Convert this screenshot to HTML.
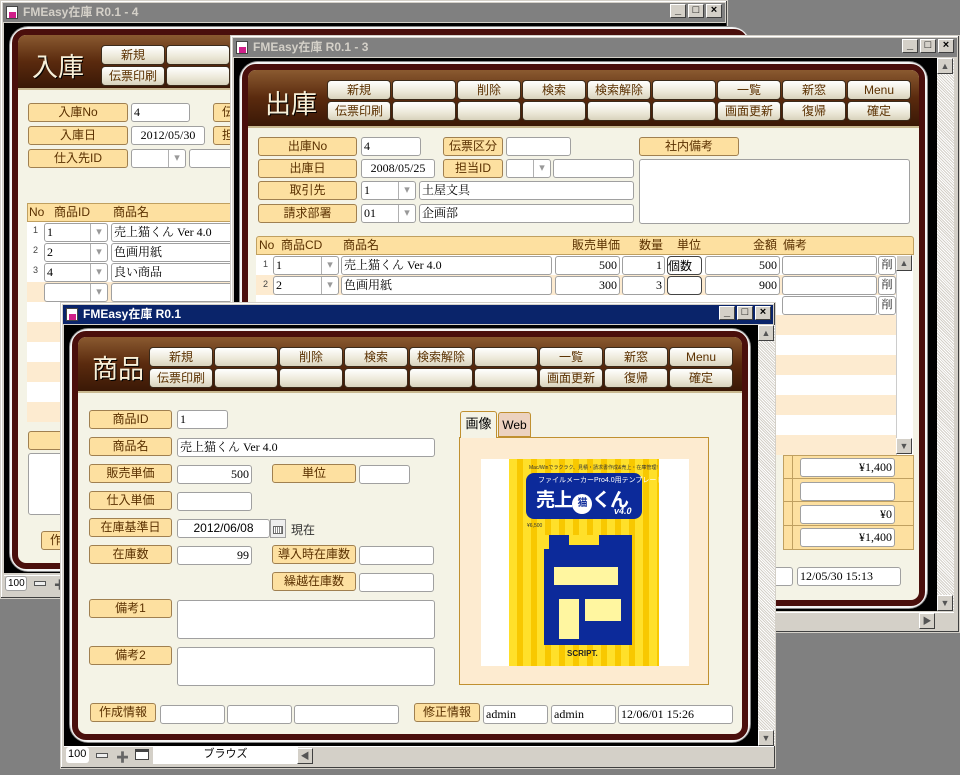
<!DOCTYPE html>
<html><head><meta charset="utf-8"><style>
*{box-sizing:border-box;margin:0;padding:0}
body{width:960px;height:775px;background:#808080;position:relative;overflow:hidden;font-family:"Liberation Sans","Noto Sans CJK JP",sans-serif;font-size:12px;color:#000}
div,span{position:absolute}
.win{background:#d4d0c8;border:1px solid #d4d0c8;box-shadow:inset -1px -1px #404040,inset 1px 1px #fff}
.tb{height:19px;left:2px;right:2px;top:2px;color:#d4d0c8;font-weight:bold;font-size:12px;line-height:19px;padding-left:20px;background:#808080}
.tb.act{background:#0a246a;color:#fff}
.ic{left:3px;top:3px;width:12px;height:13px;background:#fff;border:1px solid #444}
.ic:after{content:"";position:absolute;left:2px;top:5px;width:7px;height:6px;background:#d0208a}
.wb{top:3px;width:16px;height:14px;background:#d4d0c8;border:1px solid;border-color:#fff #404040 #404040 #fff;color:#000;font-size:11px;line-height:11px;text-align:center;font-weight:bold}
.blk{background:#000}
.frm{border-radius:18px;background:#dcdcdc;border:2px solid #f4f4f4;box-shadow:0 0 0 1px #888}
.inr{border-radius:14px;border:6px solid #4a0f0c;background:#f4f3e6;overflow:hidden}
.hd{left:0;right:0;top:0;background:linear-gradient(#8a5a30,#5a2a0e 50%,#3a1806);border-bottom:2px solid #c8b890}
.ttl{color:#f8f0d8;font-size:26px;text-shadow:1px 1px 0 #000}
.bt{height:20px;width:64px;border:1px solid #3a2a1a;border-radius:4px;background:linear-gradient(#fff,#ece8d8 60%,#d8d2bc);color:#5a3000;text-align:center;line-height:18px;font-size:12px}
.lb{height:19px;border:1px solid #a08050;border-radius:3px;background:#fde0a0;color:#5a3000;text-align:center;line-height:17px;font-size:12px}
.fd{height:19px;border:1px solid #a0a0a0;border-radius:3px;background:#fff;line-height:17px;padding:0 2px;font-family:"Liberation Serif","Noto Serif CJK JP",serif;font-size:12px;white-space:nowrap;overflow:hidden}
.r{text-align:right}.c{text-align:center}
.cb{height:19px;border:1px solid #a0a0a0;border-radius:3px;background:#fff;line-height:17px;padding-left:2px;font-family:"Liberation Serif",serif}
.cb:after{content:"▾";position:absolute;right:0;top:0;width:16px;height:17px;border-left:1px solid #b0b0b0;color:#999;text-align:center;font-size:11px}
.sb{background:#e8e6e0;background-image:repeating-linear-gradient(45deg,#d4d0c8 0 1px,#fff 1px 2px)}
.ar{width:16px;height:16px;background:#d4d0c8;border:1px solid;border-color:#fff #404040 #404040 #fff;text-align:center;font-size:9px;line-height:14px;color:#555}
.st{background:#d4d0c8;border-top:1px solid #fff;font-size:11px}
</style></head><body>

<!-- ===== Window 1 入庫 ===== -->
<div class="win" style="left:0;top:0;width:728px;height:599px">
 <div class="tb"><div class="ic"></div>FMEasy在庫 R0.1 - 4</div>
 <div class="wb" style="left:669px">_</div><div class="wb" style="left:687px">□</div><div class="wb" style="left:705px">×</div>
 <div class="blk" style="left:3px;top:22px;width:722px;height:550px"></div>
 <div class="frm" style="left:9px;top:26px;width:740px;height:544px">
  <div class="inr" style="left:0;top:0;right:0;bottom:0">
   <div class="hd" style="height:55px"><span class="ttl" style="left:14px;top:12px">入庫</span></div>
  </div>
 </div>
 <div class="bt" style="left:100px;top:44px">新規</div><div class="bt" style="left:165px;top:44px"></div>
 <div class="bt" style="left:100px;top:65px">伝票印刷</div><div class="bt" style="left:165px;top:65px"></div>
 <div class="lb" style="left:27px;top:102px;width:100px">入庫No</div><div class="fd" style="left:130px;top:102px;width:59px">4</div>
 <div class="lb" style="left:212px;top:102px;width:30px">伝</div>
 <div class="lb" style="left:27px;top:125px;width:100px">入庫日</div><div class="fd c" style="left:130px;top:125px;width:74px">2012/05/30</div>
 <div class="lb" style="left:212px;top:125px;width:30px">担</div>
 <div class="lb" style="left:27px;top:148px;width:100px">仕入先ID</div><div class="cb" style="left:130px;top:148px;width:55px"></div><div class="fd" style="left:188px;top:148px;width:50px"></div>
 <div style="left:26px;top:202px;width:210px;height:19px;background:#fde0a0;border:1px solid #c0a060;color:#5a3000;line-height:17px"><span style="left:1px">No</span><span style="left:26px">商品ID</span><span style="left:85px">商品名</span></div>
 <div style="left:26px;top:221px;width:210px;height:80px;background:#fff"></div>
 <div style="left:26px;top:281px;width:210px;height:20px;background:#fdebd0"></div>
 <span style="left:32px;top:224px;font-size:9px;color:#444">1</span><div class="cb" style="left:43px;top:222px;width:64px">1</div><div class="fd" style="left:110px;top:222px;width:130px">売上猫くん Ver 4.0</div>
 <span style="left:32px;top:244px;font-size:9px;color:#444">2</span><div class="cb" style="left:43px;top:242px;width:64px">2</div><div class="fd" style="left:110px;top:242px;width:130px">色画用紙</div>
 <span style="left:32px;top:264px;font-size:9px;color:#444">3</span><div class="cb" style="left:43px;top:262px;width:64px">4</div><div class="fd" style="left:110px;top:262px;width:130px">良い商品</div>
 <div class="cb" style="left:43px;top:282px;width:64px"></div><div class="fd" style="left:110px;top:282px;width:130px"></div>
 <div style="left:26px;top:301px;width:40px;height:120px;background:repeating-linear-gradient(#fff 0 20px,#fdebd0 20px 40px)"></div>
 <div class="lb" style="left:27px;top:430px;width:40px"></div>
 <div class="fd" style="left:27px;top:452px;width:40px;height:62px"></div>
 <div class="lb" style="left:40px;top:530px;width:30px">作</div>
 <div class="st" style="left:3px;top:574px;width:722px;height:22px"></div>
 <div class="fd" style="left:4px;top:575px;width:22px;height:15px;font-size:10px;line-height:13px;font-family:Liberation Sans">100</div>
 <span style="left:33px;top:580px;width:12px;height:5px;border:1px solid #555;background:#eee"></span>
 <span style="left:53px;top:575px;font-weight:bold;color:#555">✚</span>
</div>

<!-- ===== Window 2 出庫 ===== -->
<div class="win" style="left:230px;top:35px;width:730px;height:598px">
 <div class="tb"><div class="ic"></div>FMEasy在庫 R0.1 - 3</div>
 <div class="wb" style="left:671px">_</div><div class="wb" style="left:689px">□</div><div class="wb" style="left:707px">×</div>
 <div class="blk" style="left:3px;top:22px;width:703px;height:553px"></div>
 <div class="frm" style="left:9px;top:26px;width:687px;height:546px">
  <div class="inr" style="left:0;top:0;right:0;bottom:0">
   <div class="hd" style="height:58px"><span class="ttl" style="left:17px;top:14px">出庫</span></div>
  </div>
 </div>
 <div class="sb" style="left:706px;top:22px;width:17px;height:553px"></div>
 <div class="ar" style="left:706px;top:22px">▲</div><div class="ar" style="left:706px;top:559px">▼</div>
 <div class="st" style="left:3px;top:576px;width:720px;height:18px"></div>
 <div class="ar" style="left:688px;top:577px">▶</div>
</div>
<div class="bt" style="left:327px;top:80px">新規</div><div class="bt" style="left:392px;top:80px"></div><div class="bt" style="left:457px;top:80px">削除</div><div class="bt" style="left:522px;top:80px">検索</div><div class="bt" style="left:587px;top:80px">検索解除</div><div class="bt" style="left:652px;top:80px"></div><div class="bt" style="left:717px;top:80px">一覧</div><div class="bt" style="left:782px;top:80px">新窓</div><div class="bt" style="left:847px;top:80px">Menu</div>
<div class="bt" style="left:327px;top:101px">伝票印刷</div><div class="bt" style="left:392px;top:101px"></div><div class="bt" style="left:457px;top:101px"></div><div class="bt" style="left:522px;top:101px"></div><div class="bt" style="left:587px;top:101px"></div><div class="bt" style="left:652px;top:101px"></div><div class="bt" style="left:717px;top:101px">画面更新</div><div class="bt" style="left:782px;top:101px">復帰</div><div class="bt" style="left:847px;top:101px">確定</div>
<div class="lb" style="left:258px;top:137px;width:99px">出庫No</div><div class="fd" style="left:361px;top:137px;width:60px">4</div>
<div class="lb" style="left:258px;top:159px;width:99px">出庫日</div><div class="fd c" style="left:361px;top:159px;width:74px">2008/05/25</div>
<div class="lb" style="left:258px;top:181px;width:99px">取引先</div><div class="cb" style="left:361px;top:181px;width:55px">1</div><div class="fd" style="left:419px;top:181px;width:215px">土屋文具</div>
<div class="lb" style="left:258px;top:204px;width:99px">請求部署</div><div class="cb" style="left:361px;top:204px;width:55px">01</div><div class="fd" style="left:419px;top:204px;width:215px">企画部</div>
<div class="lb" style="left:443px;top:137px;width:60px">伝票区分</div><div class="fd" style="left:506px;top:137px;width:65px"></div>
<div class="lb" style="left:443px;top:159px;width:60px">担当ID</div><div class="cb" style="left:506px;top:159px;width:45px"></div><div class="fd" style="left:553px;top:159px;width:81px"></div>
<div class="lb" style="left:639px;top:137px;width:100px">社内備考</div><div class="fd" style="left:639px;top:159px;width:271px;height:65px"></div>
<div style="left:256px;top:236px;width:658px;height:19px;background:#fde0a0;border:1px solid #c0a060;border-radius:3px 3px 0 0;color:#5a3000;line-height:17px"><span style="left:2px">No</span><span style="left:24px">商品CD</span><span style="left:86px">商品名</span><span style="left:315px">販売単価</span><span style="left:382px">数量</span><span style="left:420px">単位</span><span style="left:496px">金額</span><span style="left:526px">備考</span></div>
<div style="left:256px;top:255px;width:640px;height:200px;background:repeating-linear-gradient(#fff 0 20px,#fdebd0 20px 40px)"></div>
<div style="left:896px;top:255px;width:17px;height:200px;background:#fff;border-left:1px solid #ccc"></div>
<div class="ar" style="left:896px;top:255px">▲</div><div class="ar" style="left:896px;top:438px">▼</div>
<span style="left:263px;top:259px;font-size:9px;color:#444">1</span><div class="cb" style="left:273px;top:256px;width:66px">1</div><div class="fd" style="left:341px;top:256px;width:211px">売上猫くん Ver 4.0</div><div class="fd r" style="left:555px;top:256px;width:65px">500</div><div class="fd r" style="left:622px;top:256px;width:43px">1</div><div class="bt" style="left:667px;top:256px;width:35px;height:19px;color:#000;text-align:left;font-size:12px;background:#fff;border-color:#444">個数</div><div class="fd r" style="left:705px;top:256px;width:75px">500</div><div class="fd" style="left:782px;top:256px;width:95px"></div><div class="fd c" style="left:878px;top:256px;width:18px;font-size:11px">削</div>
<span style="left:263px;top:279px;font-size:9px;color:#444">2</span><div class="cb" style="left:273px;top:276px;width:66px">2</div><div class="fd" style="left:341px;top:276px;width:211px">色画用紙</div><div class="fd r" style="left:555px;top:276px;width:65px">300</div><div class="fd r" style="left:622px;top:276px;width:43px">3</div><div class="bt" style="left:667px;top:276px;width:35px;height:19px;background:#fff;border-color:#444"></div><div class="fd r" style="left:705px;top:276px;width:75px">900</div><div class="fd" style="left:782px;top:276px;width:95px"></div><div class="fd c" style="left:878px;top:276px;width:18px;font-size:11px">削</div>
<div class="fd" style="left:782px;top:296px;width:95px"></div><div class="fd c" style="left:878px;top:296px;width:18px;font-size:11px">削</div>
<div style="left:783px;top:455px;width:131px;height:95px;background:#fde0a0;border:1px solid #c0a060"></div>
<div style="left:783px;top:478px;width:131px;height:1px;background:#c0a060"></div><div style="left:783px;top:501px;width:131px;height:1px;background:#c0a060"></div><div style="left:783px;top:525px;width:131px;height:1px;background:#c0a060"></div><div style="left:792px;top:455px;width:1px;height:95px;background:#c0a060"></div>
<div class="fd r" style="left:800px;top:458px;width:95px">¥1,400</div><div class="fd" style="left:800px;top:482px;width:95px"></div><div class="fd r" style="left:800px;top:505px;width:95px">¥0</div><div class="fd r" style="left:800px;top:528px;width:95px">¥1,400</div>
<div class="fd" style="left:720px;top:567px;width:73px"></div><div class="fd" style="left:797px;top:567px;width:104px">12/05/30 15:13</div>

<!-- ===== Window 3 商品 ===== -->
<div class="win" style="left:60px;top:302px;width:716px;height:467px">
 <div class="tb act"><div class="ic"></div>FMEasy在庫 R0.1</div>
 <div class="wb" style="left:658px">_</div><div class="wb" style="left:676px">□</div><div class="wb" style="left:694px">×</div>
 <div class="blk" style="left:3px;top:22px;width:694px;height:421px"></div>
 <div class="frm" style="left:9px;top:26px;width:680px;height:413px">
  <div class="inr" style="left:0;top:0;right:0;bottom:0">
   <div class="hd" style="height:56px"><span class="ttl" style="left:14px;top:12px">商品</span></div>
  </div>
 </div>
 <div class="sb" style="left:697px;top:22px;width:17px;height:421px"></div>
 <div class="ar" style="left:697px;top:22px">▲</div><div class="ar" style="left:697px;top:427px">▼</div>
 <div class="st" style="left:3px;top:443px;width:710px;height:20px"></div>
 <div class="fd" style="left:5px;top:444px;width:23px;height:16px;font-size:11px;line-height:14px;font-family:Liberation Sans;border:none">100</div>
 <span style="left:35px;top:450px;width:12px;height:5px;border:1px solid #555;background:#eee"></span>
 <span style="left:55px;top:444px;font-weight:bold;color:#666;font-size:13px">✚</span>
 <span style="left:74px;top:446px;width:14px;height:11px;border:1px solid #444;border-top-width:3px;background:#fff"></span>
 <span style="left:92px;top:444px;width:145px;height:17px;background:#fff;text-align:center;line-height:15px;font-size:11px">ブラウズ</span>
 <div class="ar" style="left:236px;top:445px">◀</div>
</div>
<div class="bt" style="left:149px;top:347px">新規</div><div class="bt" style="left:214px;top:347px"></div><div class="bt" style="left:279px;top:347px">削除</div><div class="bt" style="left:344px;top:347px">検索</div><div class="bt" style="left:409px;top:347px">検索解除</div><div class="bt" style="left:474px;top:347px"></div><div class="bt" style="left:539px;top:347px">一覧</div><div class="bt" style="left:604px;top:347px">新窓</div><div class="bt" style="left:669px;top:347px">Menu</div>
<div class="bt" style="left:149px;top:368px">伝票印刷</div><div class="bt" style="left:214px;top:368px"></div><div class="bt" style="left:279px;top:368px"></div><div class="bt" style="left:344px;top:368px"></div><div class="bt" style="left:409px;top:368px"></div><div class="bt" style="left:474px;top:368px"></div><div class="bt" style="left:539px;top:368px">画面更新</div><div class="bt" style="left:604px;top:368px">復帰</div><div class="bt" style="left:669px;top:368px">確定</div>

<div class="lb" style="left:89px;top:410px;width:83px">商品ID</div><div class="fd" style="left:177px;top:410px;width:51px">1</div>
<div class="lb" style="left:89px;top:437px;width:83px">商品名</div><div class="fd" style="left:177px;top:438px;width:258px">売上猫くん Ver 4.0</div>
<div class="lb" style="left:89px;top:464px;width:83px">販売単価</div><div class="fd r" style="left:177px;top:465px;width:75px">500</div>
<div class="lb" style="left:272px;top:464px;width:84px">単位</div><div class="fd" style="left:359px;top:465px;width:51px"></div>
<div class="lb" style="left:89px;top:491px;width:83px">仕入単価</div><div class="fd" style="left:177px;top:492px;width:75px"></div>
<div class="lb" style="left:89px;top:518px;width:83px">在庫基準日</div><div class="fd c" style="left:177px;top:519px;width:93px;font-family:Liberation Sans">2012/06/08</div>
<div style="left:270px;top:519px;width:16px;height:19px;border:1px solid #a0a0a0;background:#eee"><span style="left:2px;top:6px;width:10px;height:8px;border:1px solid #666;background:repeating-linear-gradient(90deg,#fff 0 1px,#888 1px 2px)"></span></div>
<span style="left:291px;top:521px;color:#333">現在</span>
<div class="lb" style="left:89px;top:545px;width:83px">在庫数</div><div class="fd r" style="left:177px;top:546px;width:75px">99</div>
<div class="lb" style="left:272px;top:545px;width:84px">導入時在庫数</div><div class="fd" style="left:359px;top:546px;width:75px"></div>
<div class="lb" style="left:272px;top:572px;width:84px">繰越在庫数</div><div class="fd" style="left:359px;top:573px;width:75px"></div>
<div class="lb" style="left:89px;top:599px;width:83px">備考1</div><div class="fd" style="left:177px;top:600px;width:258px;height:39px"></div>
<div class="lb" style="left:89px;top:646px;width:83px">備考2</div><div class="fd" style="left:177px;top:647px;width:258px;height:39px"></div>
<div class="lb" style="left:90px;top:703px;width:66px">作成情報</div><div class="fd" style="left:160px;top:705px;width:65px"></div><div class="fd" style="left:227px;top:705px;width:65px"></div><div class="fd" style="left:294px;top:705px;width:105px"></div>
<div class="lb" style="left:414px;top:703px;width:66px">修正情報</div><div class="fd" style="left:483px;top:705px;width:65px">admin</div><div class="fd" style="left:551px;top:705px;width:65px">admin</div><div class="fd" style="left:618px;top:705px;width:115px">12/06/01 15:26</div>

<!-- tabs & image -->
<div style="left:459px;top:437px;width:250px;height:248px;background:#fdebd0;border:1px solid #c09030"></div>
<div style="left:460px;top:411px;width:37px;height:27px;background:#f4f3e6;border:1px solid #c09030;border-bottom:none;border-radius:3px 3px 0 0;text-align:center;line-height:24px;font-size:13px">画像</div>
<div style="left:498px;top:412px;width:33px;height:25px;background:#ecd2c0;border:1px solid #c09030;border-radius:3px 3px 0 0;text-align:center;line-height:24px;font-size:12px">Web</div>
<div style="left:481px;top:459px;width:208px;height:207px;background:#fff"></div>
<div style="left:509px;top:459px;width:150px;height:207px;background:repeating-linear-gradient(90deg,#ffe02a 0 8px,#f8c800 8px 14px)">
 <span style="left:20px;top:5px;font-size:5px;color:#333;white-space:nowrap">Mac/Winでラクラク、見積・請求書作成&売上・在庫管理!</span>
 <div style="left:17px;top:14px;width:116px;height:46px;background:#0c2a9a;border-radius:8px;color:#fff">
  <span style="left:12px;top:2px;font-size:7px;white-space:nowrap">ファイルメーカーPro4.0用テンプレート</span>
  <span style="left:10px;top:12px;font-size:19px;font-weight:bold;white-space:nowrap;letter-spacing:-1px">売上<span style="position:relative;display:inline-block;width:20px;height:20px;border-radius:10px;background:#fff;color:#0c2a9a;font-size:10px;text-align:center;line-height:20px">猫</span>くん</span>
  <span style="left:88px;top:33px;font-size:9px;font-weight:bold;font-style:italic">v4.0</span>
 </div>
 <span style="left:18px;top:64px;font-size:5px;color:#333">¥6,500</span>
 <div style="left:35px;top:76px;width:88px;height:110px;background:#0c2a9a"></div>
 <div style="left:45px;top:108px;width:64px;height:18px;background:#fff6a0"></div>
 <div style="left:50px;top:140px;width:20px;height:40px;background:#fff6a0"></div>
 <div style="left:76px;top:140px;width:36px;height:22px;background:#fff6a0"></div>
 <div style="left:30px;top:76px;width:10px;height:14px;background:#ffe02a"></div>
 <div style="left:60px;top:76px;width:30px;height:10px;background:#ffe02a"></div>
 <span style="left:58px;top:190px;font-size:8px;font-weight:bold;color:#222">SCRIPT.</span>
</div>
</body></html>
